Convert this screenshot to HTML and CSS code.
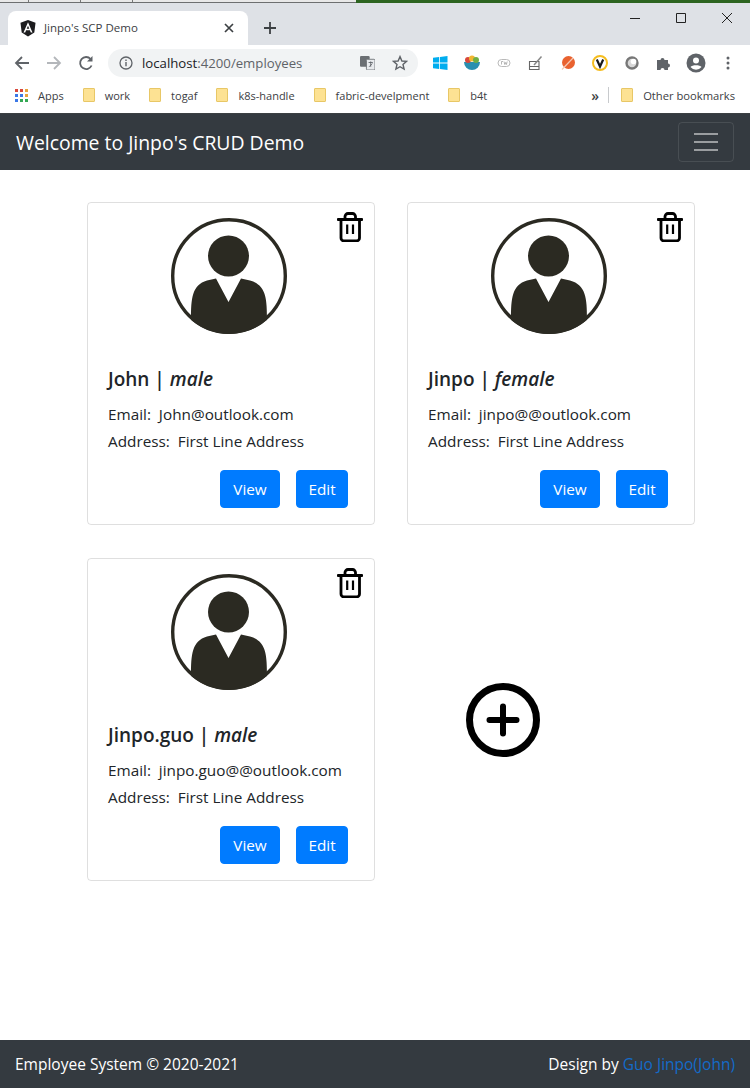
FILE: index.html
```html
<!DOCTYPE html>
<html lang="en">
<head>
    <meta charset="UTF-8">
    <title>Jinpo's SCP Demo</title>
    <link rel="stylesheet" href="styles.css">
</head>
<body>

    <div class="browser">
        <div class="top-strip">
            <span class="strip-cell"></span>
            <span class="strip-cell"></span>
            <span class="strip-cell"></span>
            <span class="strip-rest"></span>
        </div>
        <div class="tab-row">
            <div class="tab">
                <svg class="tab-logo" viewBox="0 0 16 17"><path fill="#1c1c1e" d="M8 0 15.5 2.7 14.3 12.6 8 16.5 1.7 12.6.5 2.7z"/><path fill="#fff" d="M8 2.2 3.5 12.6h1.7l.9-2.3h3.8l.9 2.3h1.7zM8 5.7l1.3 3.1H6.7z"/></svg>
                <span class="tab-title">Jinpo's SCP Demo</span>
                <svg class="tab-close" viewBox="0 0 10 10"><path d="M1 1 9 9M9 1 1 9" stroke="#3c4043" stroke-width="1.7" fill="none"/></svg>
            </div>
            <svg class="new-tab" viewBox="0 0 12 12"><path d="M6 0V12M0 6H12" stroke="#3c4043" stroke-width="1.8" fill="none"/></svg>
            <div class="window-controls">
                <svg viewBox="0 0 12 12"><path d="M1 6.5H11" stroke="#222" fill="none"/></svg>
                <svg viewBox="0 0 12 12"><path d="M1.5 1.5H10.5V10.5H1.5Z" stroke="#222" fill="none"/></svg>
                <svg viewBox="0 0 12 12"><path d="M1 1 11 11M11 1 1 11" stroke="#222" fill="none"/></svg>
            </div>
        </div>
        <div class="toolbar">
            <div class="nav-buttons">
                <svg viewBox="0 0 16 16"><path d="M15 8H2M8 2 2 8l6 6" stroke="#5f6368" stroke-width="1.8" fill="none"/></svg>
                <svg viewBox="0 0 16 16"><path d="M1 8H14M8 2l6 6-6 6" stroke="#b4b7bb" stroke-width="1.8" fill="none"/></svg>
                <svg viewBox="0 0 16 16"><path d="M13.6 10.5A6 6 0 1 1 12.6 4" stroke="#5f6368" stroke-width="1.8" fill="none"/><path d="M14.5 1v5.5H9z" fill="#5f6368"/></svg>
            </div>
            <div class="address-bar">
                <svg class="info-icon" viewBox="0 0 14 14"><circle cx="7" cy="7" r="6" stroke="#5f6368" stroke-width="1.3" fill="none"/><path d="M7 6v4.2M7 3.5v1.4" stroke="#5f6368" stroke-width="1.4"/></svg>
                <span class="url"><b>localhost</b>:4200/employees</span>
                <svg class="translate-icon" viewBox="0 0 14 14"><rect x="0" y="1" width="9" height="10" rx="1" fill="#6b6f73"/><rect x="6" y="4" width="8" height="10" rx="1" fill="#e8eaed" stroke="#6b6f73" stroke-width=".8"/><path d="M8 7h4M10 6v5M8.5 11l3-3" stroke="#5f6368" stroke-width=".8" fill="none"/></svg>
                <svg class="star-icon" viewBox="0 0 16 16"><path d="M8 1.6 9.9 6l4.7.4-3.6 3.1 1.1 4.6L8 11.7l-4.100 2.400L5 9.500 1.400 6.400 6.100 6z" stroke="#5f6368" stroke-width="1.400" fill="none"/></svg>
            </div>
            <div class="extensions">
                <svg viewBox="0 0 16 16"><path fill="#00adef" d="M1 2.800 7.200 2v5.600H1zM8 1.900 15.500 1v6.600H8zM1 8.400h6.200V14L1 13.200zM8 8.400h7.500V15L8 14.100z"/></svg>
                <svg viewBox="0 0 16 16"><path fill="#2a8fb0" d="M0 7h16a8 8 0 0 1-16 0z"/><circle cx="4" cy="5" r="3" fill="#d9483b"/><circle cx="8" cy="3.500" r="3" fill="#f2b632"/><circle cx="12" cy="5" r="3" fill="#6fae45"/></svg>
                <svg viewBox="0 0 16 16"><rect x="2" y="4.500" width="12" height="7" rx="3.500" fill="none" stroke="#b9b9b9"/><path d="M5.500 9.500v-3h1.500M8 6.500l.8 3 .8-2 .8 2 .8-3" stroke="#999" stroke-width=".7" fill="none"/></svg>
                <svg viewBox="0 0 16 16"><path d="M1.500 6.500h9.500v8H1.500zM1.500 11.500h9.500" stroke="#666" stroke-width="1.100" fill="none"/><path d="M6 10 13.500 1.500" stroke="#888" stroke-width="1.500"/></svg>
                <svg viewBox="0 0 16 16"><circle cx="8.500" cy="7.500" r="6.500" fill="#e9622f"/><path d="M2 14.500 13 3" stroke="#f4c9b5" stroke-width="1.200"/></svg>
                <svg viewBox="0 0 16 16"><circle cx="8" cy="8" r="7" fill="#fff" stroke="#f5bd1f" stroke-width="2"/><path d="M4.800 4.500 8 11.500l3.200-7" stroke="#1a1a1a" stroke-width="2.200" fill="none"/></svg>
                <svg viewBox="0 0 16 16"><circle cx="8" cy="8" r="5.500" fill="#d8d8d8" stroke="#777" stroke-width="2.400"/><circle cx="9.500" cy="6.500" r="2.800" fill="#fff"/></svg>
                <svg viewBox="0 0 16 16"><path fill="#5f6368" d="M1 5h3.500a2 2 0 1 1 4 0H12v3.500a2 2 0 1 1 0 4V15H8.500a2 2 0 1 0-4 0H1z"/></svg>
                <svg viewBox="0 0 20 20"><circle cx="10" cy="10" r="9.500" fill="#5f6368"/><circle cx="10" cy="7.500" r="3" fill="#fff"/><path d="M4.500 14c1.500-2.300 9.500-2.300 11 0a7 7 0 0 1-11 0z" fill="#fff"/></svg>
                <svg viewBox="0 0 4 16"><circle cx="2" cy="3" r="1.500" fill="#5f6368"/><circle cx="2" cy="8" r="1.500" fill="#5f6368"/><circle cx="2" cy="13" r="1.500" fill="#5f6368"/></svg>
            </div>
        </div>
        <div class="bookmarks">
            <div class="bookmark apps">
                <svg class="apps-icon" viewBox="0 0 13 13">
                    <rect width="3" height="3" fill="#d9483b"/><rect x="5" width="3" height="3" fill="#d9483b"/><rect x="10" width="3" height="3" fill="#e8a33d"/>
                    <rect y="5" width="3" height="3" fill="#3b78e7"/><rect x="5" y="5" width="3" height="3" fill="#3b78e7"/><rect x="10" y="5" width="3" height="3" fill="#e8a33d"/>
                    <rect y="10" width="3" height="3" fill="#3b78e7"/><rect x="5" y="10" width="3" height="3" fill="#34a853"/><rect x="10" y="10" width="3" height="3" fill="#34a853"/>
                </svg>
                <span>Apps</span>
            </div>
            <div class="bookmark"><i class="folder"></i><span>work</span></div>
            <div class="bookmark"><i class="folder"></i><span>togaf</span></div>
            <div class="bookmark"><i class="folder"></i><span>k8s-handle</span></div>
            <div class="bookmark"><i class="folder"></i><span>fabric-develpment</span></div>
            <div class="bookmark"><i class="folder"></i><span>b4t</span></div>
            <div class="bookmarks-end">
                <span class="more">»</span>
                <span class="bookmarks-sep"></span>
                <div class="bookmark"><i class="folder"></i><span>Other bookmarks</span></div>
            </div>
        </div>
    </div>

    <nav class="navbar">
        <span class="brand">Welcome to Jinpo's CRUD Demo</span>
        <button class="toggler"><span></span><span></span><span></span></button>
    </nav>

    <main class="employees">
        <div class="card">
            <svg class="delete-icon" viewBox="0 0 26 30"><use href="#trash"/></svg>
            <svg class="avatar" viewBox="0 0 116 116"><use href="#person"/></svg>
            <h5 class="card-title">John | <em>male</em></h5>
            <p class="card-line">Email:&nbsp; John@outlook.com</p>
            <p class="card-line">Address:&nbsp; First Line Address</p>
            <div class="card-actions">
                <button class="btn btn-view">View</button>
                <button class="btn btn-edit">Edit</button>
            </div>
        </div>

        <div class="card">
            <svg class="delete-icon" viewBox="0 0 26 30"><use href="#trash"/></svg>
            <svg class="avatar" viewBox="0 0 116 116"><use href="#person"/></svg>
            <h5 class="card-title">Jinpo | <em>female</em></h5>
            <p class="card-line">Email:&nbsp; jinpo@@outlook.com</p>
            <p class="card-line">Address:&nbsp; First Line Address</p>
            <div class="card-actions">
                <button class="btn btn-view">View</button>
                <button class="btn btn-edit">Edit</button>
            </div>
        </div>

        <div class="card">
            <svg class="delete-icon" viewBox="0 0 26 30"><use href="#trash"/></svg>
            <svg class="avatar" viewBox="0 0 116 116"><use href="#person"/></svg>
            <h5 class="card-title">Jinpo.guo | <em>male</em></h5>
            <p class="card-line">Email:&nbsp; jinpo.guo@@outlook.com</p>
            <p class="card-line">Address:&nbsp; First Line Address</p>
            <div class="card-actions">
                <button class="btn btn-view">View</button>
                <button class="btn btn-edit">Edit</button>
            </div>
        </div>

        <div class="add-cell">
            <svg class="add-icon" viewBox="0 0 74 74">
                <circle cx="37" cy="37" r="33.500" fill="none" stroke="#000" stroke-width="7"/>
                <path d="M37 23.500V50.500M23.500 37H50.500" stroke="#000" stroke-width="6" stroke-linecap="round" fill="none"/>
            </svg>
        </div>
    </main>

    <footer class="footer">
        <span>Employee System © 2020-2021</span>
        <span>Design by <a href="#">Guo Jinpo(John)</a></span>
    </footer>

    <svg class="icon-defs">
        <symbol id="trash" viewBox="0 0 26 30">
            <path d="M1 7.500H25M4 8V26a3 3 0 0 0 3 3H19.500a3 3 0 0 0 3-3V8M8 7V4.500A3 3 0 0 1 11 1.500H15.500A3 3 0 0 1 18.500 4.500V7" stroke="#000" stroke-width="2.800" fill="none" stroke-linecap="round"/>
            <path d="M10.200 12.500V22M16 12.500V22" stroke="#000" stroke-width="2.200" fill="none"/>
        </symbol>
        <symbol id="person" viewBox="0 0 116 116">
            <circle cx="58" cy="58" r="56.300" fill="#fff" stroke="#2b2a22" stroke-width="3.400"/>
            <circle cx="57.500" cy="38" r="20.500" fill="#2b2a22"/>
            <path fill="#2b2a22" d="M20 101.800C20 80 21 67 36 62.500L45 60.500 57.500 84 70 60.500 79 62.500C95 67 96 80 96 101.800A58 58 0 0 1 20 101.800Z"/>
        </symbol>
    </svg>

</body>
</html>
```

FILE: styles.css
```css
/* Reset default margins and paddings */
* {
    margin: 0;
    padding: 0;
    box-sizing: border-box;
}

body {
    background-color: #FFFFFF;
    color: #212529;
    font-family: 'Open Sans', 'Noto Sans', sans-serif;
    display: flex;
    flex-direction: column;
    height: 100vh;
    overflow: hidden;
}

/* Browser window */
.browser {
    flex: none;
    height: 114px;
    background-color: #FFFFFF;
    border-bottom: 1px solid #3c4043;
    font-family: 'Open Sans', sans-serif;
}

.top-strip {
    display: flex;
    height: 3px;
    background-color: #e8e8e8;
    border-bottom: 1px solid #6d6f70;
}

.strip-cell {
    width: 52px;
    border-right: 1px solid #777;
}

.strip-cell:first-child {
    width: 29px;
}

.strip-rest {
    width: 223px;
}

.top-strip::after {
    content: "";
    flex: 1;
    background-color: #2c6420;
    margin-bottom: -1px;
}

.tab-row {
    display: flex;
    align-items: flex-end;
    height: 42px;
    background-color: #dee1e6;
    padding-left: 8px;
    position: relative;
}

.tab {
    display: flex;
    align-items: center;
    width: 240px;
    height: 34px;
    background-color: #FFFFFF;
    border-radius: 8px 8px 0 0;
    padding: 0 12px;
}

.tab-logo {
    width: 16px;
    height: 17px;
    margin-right: 8px;
}

.tab-title {
    flex: 1;
    font-size: 11.500px;
    color: #3c4043;
    margin-bottom: 2px;
}

.tab-close {
    width: 10px;
    height: 10px;
    margin-right: 2px;
}

.new-tab {
    width: 12px;
    height: 12px;
    margin: 0 0 11px 16px;
}

.window-controls {
    position: absolute;
    top: 9px;
    right: 17px;
    display: flex;
    gap: 34px;
}

.window-controls svg {
    width: 12px;
    height: 12px;
}

.toolbar {
    display: flex;
    align-items: center;
    height: 35px;
    padding-left: 14px;
}

.nav-buttons {
    display: flex;
    align-items: center;
    gap: 16px;
    width: 94px;
}

.nav-buttons svg {
    width: 16px;
    height: 16px;
}

.address-bar {
    display: flex;
    align-items: center;
    width: 310px;
    height: 28px;
    background-color: #f1f3f4;
    border-radius: 14px;
    padding: 0 10px 0 11px;
}

.info-icon {
    width: 14px;
    height: 14px;
    margin-right: 9px;
}

.url {
    flex: 1;
    font-size: 13.200px;
    color: #5f6368;
}

.url b {
    font-weight: 400;
    color: #202124;
}

.translate-icon {
    width: 15px;
    height: 15px;
    margin-right: 17px;
}

.star-icon {
    width: 16px;
    height: 16px;
}

.extensions {
    display: flex;
    align-items: center;
    margin-left: 6px;
}

.extensions svg {
    width: 32px;
    height: 16px;
}

.extensions svg:nth-child(9) {
    height: 20px;
}

.bookmarks {
    display: flex;
    align-items: center;
    height: 33px;
    padding: 0 15px 3px;
    gap: 19px;
    font-size: 11px;
    color: #3c4043;
}

.bookmark {
    display: flex;
    align-items: center;
    gap: 10px;
}

.apps-icon {
    width: 13px;
    height: 13px;
}

.folder {
    width: 12px;
    height: 14px;
    background-color: #fde293;
    border: 1px solid #e8c766;
    border-radius: 1px;
}

.bookmarks-end {
    display: flex;
    align-items: center;
    margin-left: auto;
    font-size: 11.200px;
}

.more {
    font-size: 14px;
    font-weight: 600;
    margin-right: 9px;
}

.bookmarks-sep {
    width: 1px;
    height: 16px;
    background-color: #c8cacd;
    margin-right: 12px;
}

/* Navbar */
.navbar {
    flex: none;
    display: flex;
    align-items: center;
    justify-content: space-between;
    height: 56px;
    background-color: #343a40;
    padding: 0 16px;
}

.brand {
    font-size: 19.400px;
    color: #FFFFFF;
    margin-top: 1px;
}

.toggler {
    display: flex;
    flex-direction: column;
    align-items: center;
    justify-content: center;
    gap: 6px;
    width: 56px;
    height: 40px;
    background: none;
    border: 1px solid rgba(255, 255, 255, 0.1);
    border-radius: 4px;
}

.toggler span {
    width: 24px;
    height: 2px;
    background-color: rgba(255, 255, 255, 0.5);
}

/* Employee cards */
.employees {
    flex: 1;
    display: grid;
    grid-template-columns: 288px 288px;
    grid-auto-rows: min-content;
    column-gap: 32px;
    row-gap: 33px;
    padding: 32px 0 0 87px;
}

.card {
    position: relative;
    display: flex;
    flex-direction: column;
    border: 1px solid rgba(0, 0, 0, 0.125);
    border-radius: 4px;
    padding: 15px 26px 16px 20px;
}

.delete-icon {
    position: absolute;
    top: 9px;
    right: 11px;
    width: 26px;
    height: 30px;
}

.avatar {
    align-self: center;
    width: 116px;
    height: 116px;
    margin: 0 0 32px 2px;
}

.card-title {
    font-size: 19px;
    font-weight: 600;
    line-height: 27px;
    margin-bottom: 8px;
}

.card-line {
    font-size: 15.300px;
    line-height: 27px;
}

.card-actions {
    display: flex;
    justify-content: flex-end;
    gap: 16px;
    margin-top: 15px;
}

.btn {
    height: 38px;
    background-color: #007bff;
    border: 1px solid #007bff;
    border-radius: 4px;
    color: #FFFFFF;
    font-family: inherit;
    font-size: 15.300px;
}

.btn-view {
    width: 60px;
}

.btn-edit {
    width: 52px;
}

.add-cell {
    display: flex;
    align-items: center;
    padding-left: 59px;
}

.add-icon {
    width: 74px;
    height: 74px;
}

/* Footer */
.footer {
    flex: none;
    display: flex;
    align-items: center;
    justify-content: space-between;
    height: 48px;
    background-color: #343a40;
    color: #FFFFFF;
    padding: 0 15px;
    font-size: 15.500px;
}

.footer a {
    color: #136bc8;
    text-decoration: none;
}

.icon-defs {
    display: none;
}
```
